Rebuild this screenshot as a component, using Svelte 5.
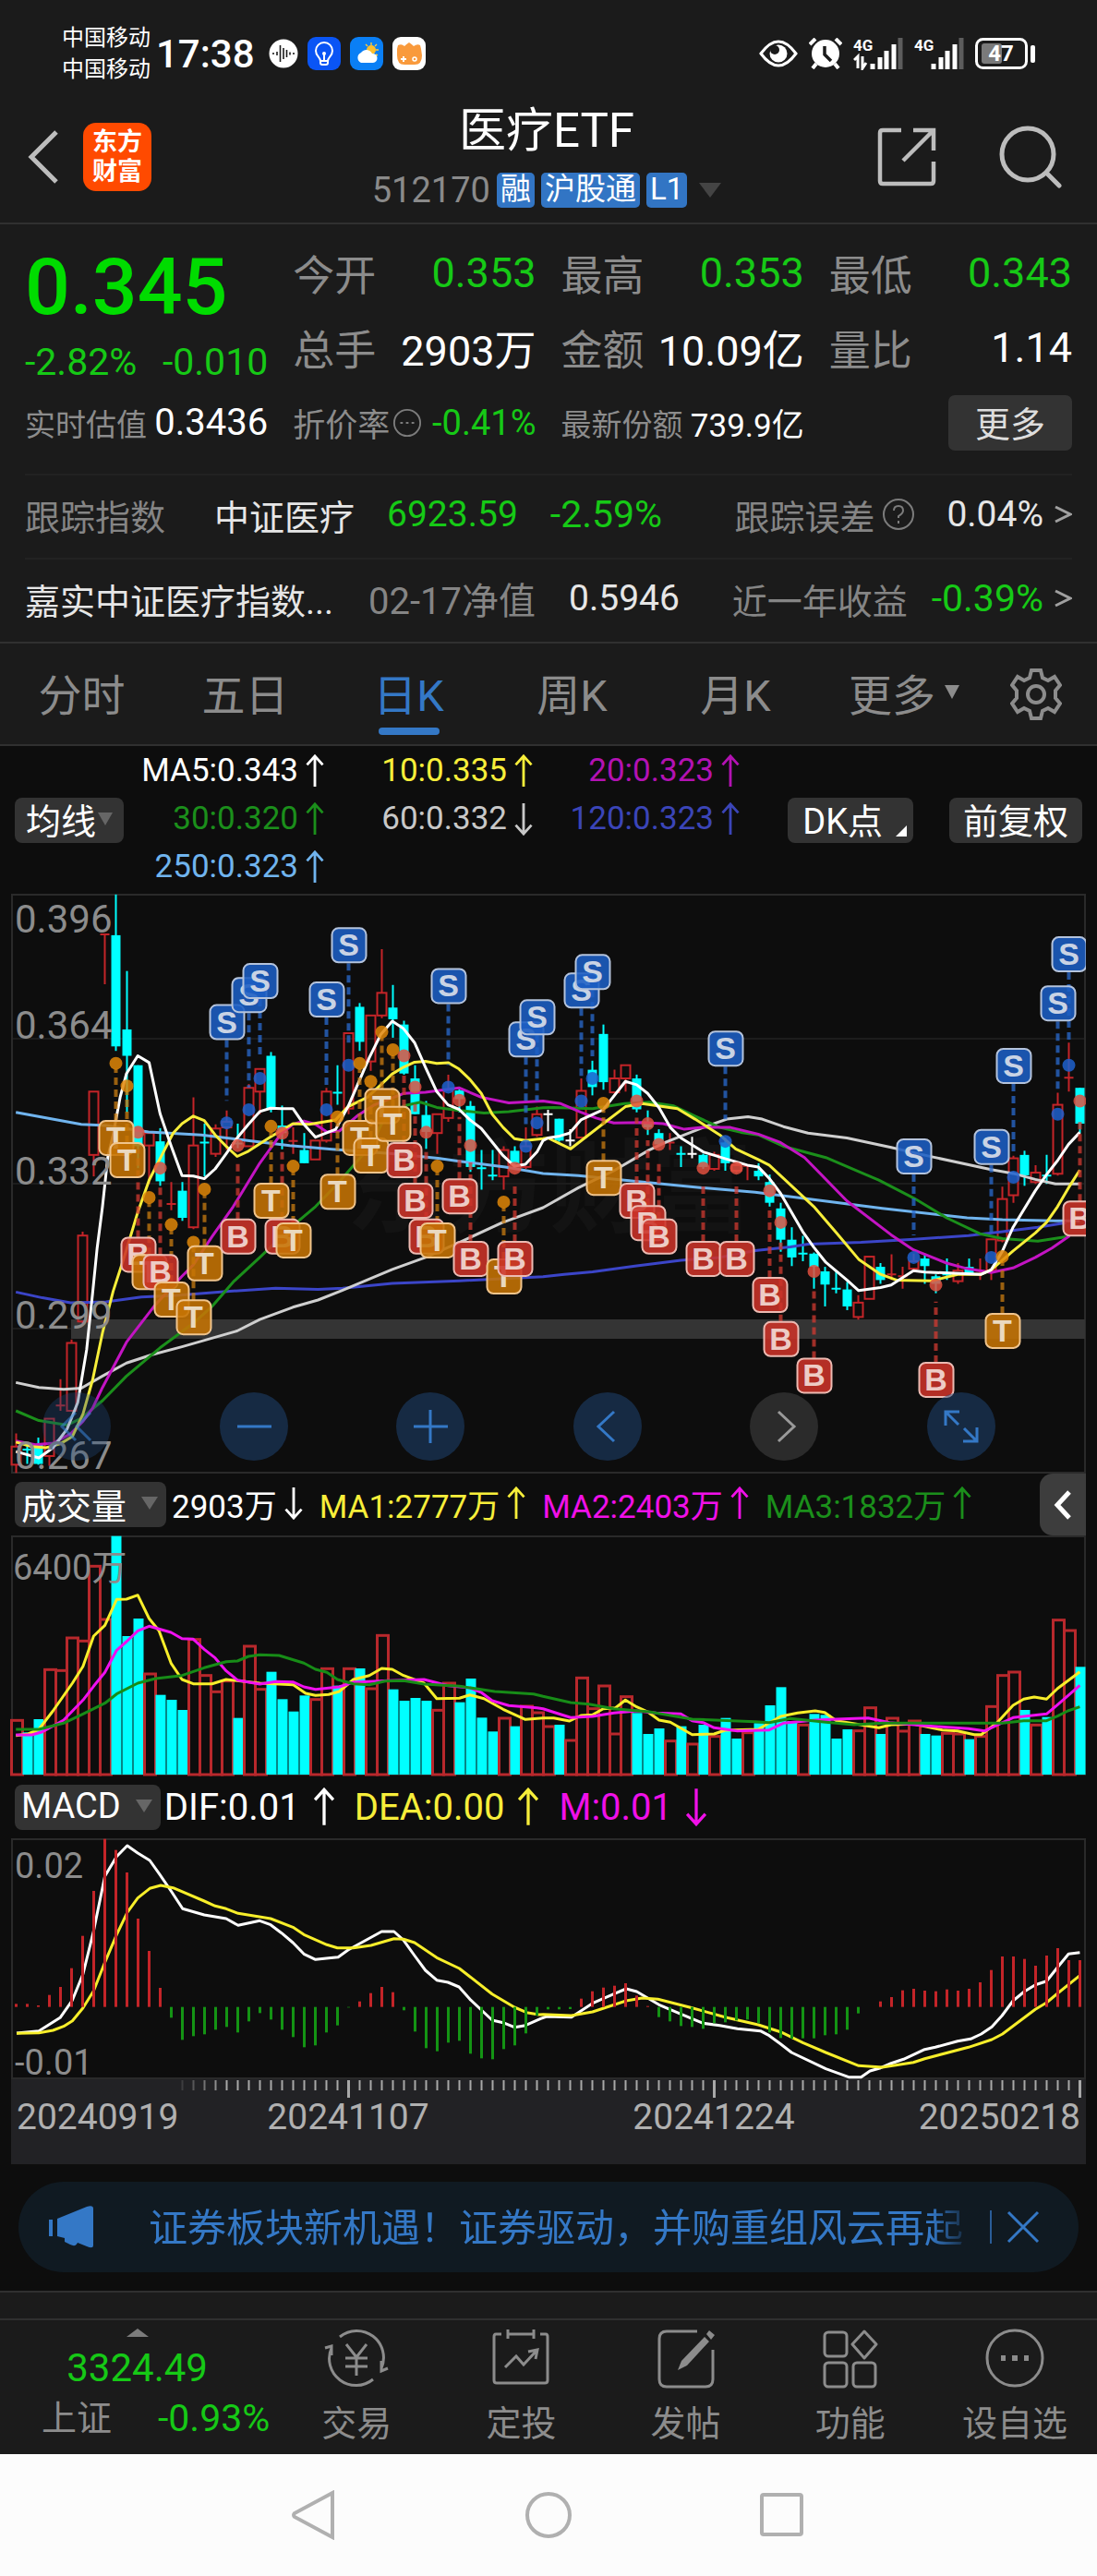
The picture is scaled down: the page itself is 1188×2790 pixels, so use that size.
<script>
  const STEP = 12;
  const cx = (i) => 5.5 + STEP * i;
  const sx = (v) => v / 2.6133 - 12;
  const sy = (v) => (v - 20) / 2.45;
  const vy = (v) => (v - 220) / 3;
  const my = (v) => (v - 214) / 3;

  const line = (text, fy, dx = 0) =>
    text
      .trim()
      .split(/\s+/)
      .map((p) => {
        const [x, y] = p.split(',').map(Number);
        return `${sx(x + dx).toFixed(1)},${fy(y).toFixed(1)}`;
      })
      .join(' ');
  // Each series is kept as two halves; the second half starts at HALF.
  const HALF = 1537;
  const series = (color, a, b, fy) => ({ color, pts: line(a, fy) + ' ' + line(b, fy, HALF) });

  // kind, high, body top, body bottom, low
  const candles = `r1452,1487,1535,1557 c1483,1495,1500,1533 c1463,1480,1533,1535 r1413,1413,1512,1538 r1308,1378,1380,1392 r1203,1212,1392,1392
  r917,927,1155,1160 r545,545,713,770 r128,128,130,260 c22,130,425,437 c225,380,450,600 c475,475,690,748 r655,655,688,790 c642,677,783,795
  r785,843,850,860 c785,808,880,888 r560,688,905,910 c630,680,685,770 r632,643,710,718 r595,625,640,700 c630,683,690,695 r525,535,690,690
  r485,485,545,605 c440,450,590,600 c582,635,655,698 r640,676,682,710 c655,700,735,735 r675,675,725,725 r535,545,675,680 c475,548,552,580
  r390,390,590,605 c310,320,413,437 r343,343,465,490 r167,283,343,350 c262,322,353,402 c357,367,497,500 c475,510,605,605 c570,607,652,697
  r603,605,655,710 r500,540,615,625 c535,542,565,600 c570,583,745,758 c700,748,752,805 c700,768,772,780 r690,700,770,805 c690,702,735,750
  r640,690,745,750 r585,605,660,665 w593,605,607,650 c617,617,675,678 w645,675,680,690 r510,543,667,667 c463,487,533,555 c367,392,520,540
  r487,510,547,550 r475,475,510,545 c500,510,592,600 c595,625,640,660 c645,655,685,690 r655,680,685,700 c690,710,714,745 w665,710,712,722
  c710,713,745,750 r705,713,750,755 c668,680,735,755 r735,740,755,760 r740,742,745,780 c735,755,770,780 c765,785,840,850 c840,855,938,970
  c905,938,985,1008 c928,975,982,995 c972,975,1010,1068 c1010,1022,1057,1115 c1022,1068,1072,1080 c1050,1070,1115,1125 r1085,1105,1143,1150
  r983,983,1095,1095 c1000,1010,1045,1055 r977,1030,1034,1045 r1010,1035,1040,1068 r975,995,1015,1018 c975,988,1008,1055 c1030,1035,1055,1080
  c988,1030,1034,1045 r1000,1020,1048,1055 c988,1010,1028,1030 r988,1020,1025,1045 r937,937,1020,1045 r797,830,940,945 r715,722,820,840
  c702,713,767,795 r740,760,785,790 c713,768,772,790 r548,580,763,768 r415,508,512,545 c535,535,630,655`
    .trim()
    .split(/\s+/)
    .map((s, i) => {
      const [hi, top, bot, lo] = s.slice(1).split(',').map((n) => sy(+n));
      return { kind: s[0], x: cx(i), hi, top, bot, lo };
    });

  const averages = [
    series('#70b4ee', '45,600 230,632 300,635 420,652 570,660 700,675 820,688 940,698 1110,710 1240,722 1300,730 1430,745', '0,762 100,768 250,782 450,800 600,812 750,830 960,855 1200,880 1300,885 1450,888 1519,888', sy),
    series('#3b45c8', '45,1077 120,1092 200,1105 300,1103 400,1090 500,1086 650,1075 780,1067 900,1070 970,1067 1110,1054 1300,1047', '0,1036 60,1030 140,1023 260,1008 390,993 500,985 600,967 700,957 750,950 900,945 1050,937 1204,927 1300,917 1400,905 1480,893', sy),
    series('#cfcfcf', '45,1317 110,1330 180,1335 230,1332 290,1300 358,1265 430,1243 515,1222 671,1180 735,1150 829,1117 900,1098 970,1072 1110,1017 1204,985 1300,945 1420,893', '0,853 100,800 200,755 300,700 350,678 453,640 520,618 580,612 620,618 680,638 750,655 860,668 985,693 1040,705 1100,718 1268,752 1330,762 1393,778 1450,790 1519,790', sy),
    series('#1b8f1b', '45,1392 110,1418 190,1430 230,1412 290,1365 358,1300 453,1225 547,1160 600,1115 660,1050 735,985 830,900 893,850 955,790 1020,720 1050,690 1080,630 1142,583 1190,573 1236,587 1300,595 1370,602 1440,598', '0,588 30,587 140,590 230,577 300,573 370,583 430,610 500,640 560,653 609,660 680,690 800,720 950,780 1050,828 1142,880 1236,922 1300,935 1400,942 1480,930', sy),
    series('#c314c3', '45,1472 100,1482 150,1478 200,1453 235,1420 262,1385 290,1330 358,1210 440,1110 515,1035 547,1005 600,930 660,850 735,735 797,655 829,632 860,623 893,632 925,652 960,650 1010,610 1060,580 1142,550 1204,547 1299,535 1362,560 1440,575', '0,570 50,577 107,600 150,615 200,628 280,627 340,630 400,645 450,640 530,640 609,658 672,680 740,720 860,835 985,925 1048,965 1142,1000 1200,1015 1268,1025 1330,1013 1393,985 1440,960 1490,928', sy),
    series('#f7ee3a', '45,1475 90,1487 130,1490 170,1480 205,1460 235,1400 262,1310 290,1185 320,1075 353,980 390,865 422,780 453,723 490,655 515,630 547,610 578,622 609,660 640,690 671,717 703,703 766,665 829,630 875,632 950,620 985,585 1040,560 1078,527 1110,498 1142,480 1173,467 1204,465 1236,470 1268,468 1299,485 1330,513 1362,550 1393,605 1424,640 1456,670 1487,675', '0,670 14,668 47,683 78,697 170,630 233,585 280,577 380,590 430,618 500,660 545,697 609,725 640,740 703,795 766,850 830,920 893,990 955,1030 1000,1045 1100,1047 1173,1030 1240,1030 1268,1018 1330,968 1393,920 1425,892 1456,850 1487,800 1519,753', sy),
    series('#ffffff', '45,1500 110,1517 150,1490 190,1440 220,1370 245,1230 262,1080 275,960 290,850 305,720 320,660 340,560 358,497 390,450 422,468 453,603 484,688 515,768 547,769 578,776 609,750 640,710 671,668 703,632 735,598 766,589 797,590 829,590 860,632 893,666 950,645 985,585 1045,455 1078,393 1110,358 1142,378 1173,415 1204,480 1236,545 1268,580 1299,592 1330,620 1362,643 1424,715 1456,743 1487,738 1520,705', '0,675 14,668 47,663 75,655 107,620 170,593 233,518 265,527 296,550 328,588 360,640 390,668 453,705 515,723 578,740 609,745 640,775 672,815 735,917 766,958 800,998 860,1045 893,1073 955,1065 985,1058 1048,1020 1080,1024 1240,1030 1268,1018 1299,970 1330,905 1393,808 1425,765 1456,728 1487,685 1519,653', sy)
  ];

  // type, index, badge centre, dot centre
  const signals = `T9,669,470 T10,728,530 B11,979,653 T12,1025,826 B13,1025,748 T14,1098,898 T16,1145,945 T17,1002,804 S19,362,628 B20,931,688 S21,290,593 S22,253,510
  T23,836,637 B24,931,655 T25,941,743 S28,302,593 T29,812,612 S30,158,475 T31,669,470 T33,585,387 T32,716,518 T34,632,434 B35,728,450 B36,836,533 B37,931,653
  T38,941,743 S39,266,533 B40,824,568 B41,990,688 T44,1037,838 B45,990,748 S46,408,690 S47,349,628 S51,278,570 S52,229,510 T53,775,576 B56,836,570 B57,895,630
  B58,931,685 B62,990,748 S64,432,677 B65,990,748 B68,1086,808 B69,1203,892 B72,1300,1022 S81,718,985 B83,1311,1058 S88,693,985 T89,1181,983 S90,478,772
  S94,312,605 S95,182,475 B96,883,570`
    .trim()
    .split(/\s+/)
    .map((s) => {
      const t = s[0];
      const [i, b, d] = s.slice(1).split(',').map(Number);
      const gap = t === 'S' ? -24 : t === 'B' ? 18 : 6;
      return { t, x: cx(i), by: sy(b), dy: sy(d), from: sy(b) + (t === 'S' ? 19 : -19), to: sy(d) + gap };
    });

  const volumes = `r818 c860 c817 r653 r656 r550 r560 r317 r490 c222 c547 c490 r667 c738 c754 c787 r555 r672 r725 r690 c813 r577 r717 c663 c752 c792 c740 r750 r650 c708
  r650 c652 r715 r542 c720 c757 c748 c757 r785 r697 c762 c685 c812 c857 r811 c840 r772 r793 r838 c835 r883 r680 r780 r706 r862 r741 c797 c865 c847 r885 c840 r895 c835
  r870 c813 c880 r858 c830 c772 c713 c823 r833 c800 c803 c880 c850 r852 r777 c865 r811 r853 r820 c865 c870 r860 r862 c882 r870 r773 r672 r661 c787 r833 c810 r492 r526 c647`
    .trim()
    .split(/\s+/)
    .map((s, i) => ({ up: s[0] === 'r', x: cx(i), y: vy(+s.slice(1)) }));

  const volumeLines = [
    series('#f7ee2a', '45,870 80,865 110,850 150,790 205,700 235,645 265,547 297,512 330,428 358,427 390,414 422,490 450,530 484,635 515,688 547,702 600,702 640,688 735,700 830,705 865,733 893,740 930,737 960,727 1000,688 1045,675 1080,652 1110,655 1142,675 1200,700 1236,750 1300,749 1330,738 1370,750 1424,785 1487,818', '0,813 30,813 75,823 107,805 140,803 170,783 205,780 233,755 265,777 296,793 328,820 360,827 422,867 484,865 515,853 609,850 672,808 720,797 770,790 797,795 830,822 950,845 985,835 1050,833 1130,852 1173,855 1220,867 1240,867 1285,828 1330,772 1360,752 1390,745 1425,752 1456,717 1519,663', vy),
    series('#f010f0', '45,868 90,868 120,858 180,820 235,755 265,710 297,665 330,593 358,565 390,530 422,515 484,535 515,555 547,557 578,590 609,618 640,660 672,690 735,703 780,695 829,696 860,712 893,720 960,712 1000,697 1100,692 1200,688 1268,708 1330,715 1362,730 1393,757 1440,773 1520,780', '0,783 78,812 140,808 200,797 265,790 320,797 390,800 422,822 453,828 484,845 550,855 640,852 680,830 770,820 830,817 920,813 980,828 1080,838 1204,848 1250,855 1330,812 1425,800 1456,770 1519,707', vy),
    series('#178c17', '45,850 110,850 180,830 235,800 297,765 330,735 390,700 440,685 515,675 578,650 640,630 672,628 703,613 735,608 790,610 860,635 893,655 925,665 955,688 1000,702 1045,705 1090,693 1142,692 1200,703 1300,710 1400,727 1510,735', '0,743 78,763 130,768 200,783 300,793 422,817 600,825 640,828 700,815 800,827 880,835 960,830 1300,830 1360,822 1425,822 1456,807 1485,790 1519,777', vy)
  ];

  const ZERO = my(762);
  const macd = `752 752 757 723 697 636 531 385 216 252 325 475 580 700 797 869 857 851 836 827 845 809 782 803 836 860 893 887 845 822 764 744 717 697 714 773 842 896 906 878 872
  914 929 932 899 887 848 790 770 770 769 735 711 699 693 685 725 759 795 809 824 827 833 815 812 806 803 815 845 863 865 864 864 854 851 836 783 762 744 730 708 703 709 711
  705 709 703 682 642 598 598 606 628 595 571 610 610`
    .trim()
    .split(/\s+/)
    .slice(0, 97)
    .map((s, i) => ({ x: cx(i), y: my(+s) }));

  const macdLines = [
    series('#ffffff', '47,847 110,840 170,797 205,740 235,655 265,515 297,337 330,273 360,238 390,262 424,286 453,333 484,385 517,443 578,463 640,475 674,497 735,482 766,495 797,522 829,553 860,590 893,608 930,603 957,600 985,577 1080,517 1115,517 1142,545 1173,595 1204,643 1236,675 1268,682 1299,697 1330,737 1393,805 1424,813 1456,828 1487,822 1530,800', '10,793 80,795 107,775 140,750 200,720 235,703 265,712 296,733 328,755 390,785 453,815 500,822 550,833 615,840 640,855 672,882 703,910 800,963 865,990 900,990 925,970 955,960 985,945 1020,932 1048,917 1080,900 1110,893 1173,873 1210,866 1240,850 1270,827 1299,790 1330,742 1362,712 1393,690 1425,678 1456,633 1487,590 1519,585', my),
    series('#f7ee2a', '47,848 110,846 150,838 180,825 205,807 235,765 265,710 297,617 330,527 360,455 390,408 424,377 455,367 490,375 578,418 609,434 640,443 674,458 766,475 829,503 860,527 925,560 955,570 1000,570 1050,562 1115,540 1142,542 1173,553 1236,602 1300,637 1393,720 1456,763 1490,780 1525,787', '0,786 80,790 140,778 235,742 280,733 325,737 422,765 515,795 609,820 672,843 735,878 800,910 893,953 960,958 1048,942 1080,930 1204,893 1270,868 1300,850 1393,770 1425,748 1456,718 1519,660', my)
  ];

  const ticks = Array.from({ length: 82 }, (_, k) => k + 15).map((i) => ({
    x: cx(i),
    h: i % 33 === 30 ? 19 : 11,
    w: i % 33 === 30 ? 3 : 2,
    o: Math.min(1, (i - 14) / 5)
  }));

  const priceLabels = [['0.396', 42], ['0.364', 157], ['0.332', 315], ['0.299', 471], ['0.267', 623]];

  const legend = [
    ['MA5:0.343', 'up', 'white'], ['10:0.335', 'up', 'yellow'], ['20:0.323', 'up', 'purple'],
    ['30:0.320', 'up', 'green'], ['60:0.332', 'down', 'silver'], ['120:0.323', 'up', 'blue'],
    ['250:0.323', 'up', 'sky']
  ];
  const volumeLegend = [['2903万', 'down', 'white'], ['MA1:2777万', 'up', 'yellow'], ['MA2:2403万', 'up', 'pink'], ['MA3:1832万', 'up', 'green']];
  const macdLegend = [['DIF:0.01', 'up', 'white'], ['DEA:0.00', 'up', 'yellow'], ['M:0.01', 'down', 'pink']];

  const chartTools = [
    ['后退到最早', 'M36 22 L21 37 L36 52 M52 22 L37 37 L52 52', 'dim'],
    ['缩小', 'M19 37 H56', ''],
    ['放大', 'M19 37 H56 M37 19 V55', ''],
    ['向左', 'M44 21 L27 37 L44 53', ''],
    ['向右', 'M31 21 L48 37 L31 53', 'off'],
    ['全屏', 'M20 36 V21 H35 M20 21 L34 35 M54 38 V53 H39 M54 53 L40 39', '']
  ];

  const tabs = ['分时', '五日', '日K', '周K', '月K'];
  let active = $state('日K');
</script>

{#snippet arrow(dir)}
  <svg class="arrow" viewBox="0 0 20 38" aria-hidden="true">
    <path d={dir === 'up' ? 'M10 37 V2 M1 12 L10 2 L19 12' : 'M10 1 V36 M1 26 L10 36 L19 26'} />
  </svg>
{/snippet}

<div class="page">
  <div class="status">
    <div class="carriers"><span>中国移动</span><span>中国移动</span></div>
    <span class="clock">17:38</span>
    <div class="apps">
      <svg viewBox="0 0 32 32" width="32" height="32"><circle cx="16" cy="16" r="15.500" fill="#fff" /><path d="M5 15v2M9 14v4M12.500 7v18M16 10v12M19.500 12v8M23 14.500v3M27 15v2" stroke="#1c1c1c" stroke-width="1.600" fill="none" /></svg>
      <svg viewBox="0 0 36 36" width="36" height="36"><rect width="36" height="36" rx="9" fill="#0a55f5" /><path d="M14 26 C14 22 9 21 9 15 A9 9 0 0 1 27 15 C27 21 22 22 22 26 V28 Q22 30 20 30 H16 Q14 30 14 28 Z M14 26 H22 M18 25 V19" stroke="#fff" stroke-width="2" fill="none" /><circle cx="18" cy="18" r="2" fill="#fff" /></svg>
      <svg viewBox="0 0 36 36" width="36" height="36"><rect width="36" height="36" rx="9" fill="#0a7ff5" /><path d="M23 6v3M17 8l2 2M29 8l-2 2M31 14h-3M30 20l-2-1" stroke="#ffc93c" stroke-width="1.400" /><circle cx="23" cy="14" r="5" fill="#ffc02e" /><path d="M12 28 a6 6 0 0 1 0-11 a7 7 0 0 1 12 1 a5 5 0 0 1 1 10 Z" fill="#fff" /></svg>
      <svg viewBox="0 0 36 36" width="36" height="36"><rect width="36" height="36" rx="9" fill="#fff" /><path d="M5 13 L6 9 Q10 7 13 10 Q15 8 18 6 Q21 8 23 10 Q27 7 30 9 L31 13 L32 20 Q32 30 24 30 H13 Q5 30 5 20 Z" fill="#f99a3c" /><path d="M9 24h6M12 21v6" stroke="#fff" stroke-width="2" /><circle cx="24" cy="24" r="2" fill="none" stroke="#fff" stroke-width="1.500" /></svg>
    </div>
    <div class="radio">
      <svg viewBox="0 0 42 30" width="42" height="30"><path d="M2 15 Q21 -11 40 15 Q21 41 2 15 Z" fill="none" stroke="#fff" stroke-width="3" /><circle cx="21" cy="15" r="9.500" fill="#fff" /><circle cx="17" cy="11" r="5" fill="#1b1b1b" /></svg>
      <svg viewBox="0 0 36 34" width="36" height="34"><circle cx="18" cy="17" r="15" fill="#fff" /><path d="M1 7 L7 1 M35 7 L29 1 M4 33 L8 28 M32 33 L28 28" stroke="#fff" stroke-width="4" /><path d="M17 9 V18 L24 25" stroke="#1b1b1b" stroke-width="3.500" fill="none" /></svg>
      <svg viewBox="0 0 54 36" width="54" height="36"><text x="0" y="15" font-size="17" font-weight="700" fill="#fff">4G</text><path d="M1 25 L5 21 V34 M10 21 V34 L14 28" stroke="#fff" stroke-width="3" fill="none" /><path d="M21 29v6M29 22v13M36 15v20M44 8v27" stroke="#fff" stroke-width="5" /><path d="M51 1v34" stroke="#5c5c5c" stroke-width="5" /></svg>
      <svg viewBox="0 0 54 36" width="54" height="36"><text x="0" y="15" font-size="17" font-weight="700" fill="#fff">4G</text><path d="M21 29v6M29 22v13M36 15v20M44 8v27" stroke="#fff" stroke-width="5" /><path d="M51 1v34" stroke="#5c5c5c" stroke-width="5" /></svg>
      <svg viewBox="0 0 66 36" width="66" height="36"><rect x="1.500" y="2.500" width="54" height="31" rx="7" fill="none" stroke="#fff" stroke-width="3" /><rect x="7" y="7" width="22" height="22" rx="3" fill="#7a7a7a" /><rect x="60" y="9" width="5" height="19" rx="2" fill="#fff" /><text x="28" y="26" font-size="24" font-weight="700" fill="#fff" text-anchor="middle">47</text></svg>
    </div>
  </div>

  <header>
    <div class="side">
      <button class="plain" aria-label="返回"><svg viewBox="0 0 34 60" width="34" height="60"><path d="M31 3 L4 30 L31 57" stroke="#bdbdbd" stroke-width="5" fill="none" /></svg></button>
      <a class="logo" href="#home"><span>东方</span><span>财富</span></a>
    </div>
    <div class="title">
      <h1>医疗ETF</h1>
      <div class="code"><span>512170</span><b>融</b><b>沪股通</b><b>L1</b><i></i></div>
    </div>
    <div class="side end">
      <button class="plain" aria-label="分享"><svg viewBox="0 0 64 64" width="64" height="64"><path d="M26 3 H6 Q3 3 3 6 V58 Q3 61 6 61 H58 Q61 61 61 58 V37 M39 3 H61 V25 M60 4 L28 36" stroke="#bdbdbd" stroke-width="4.500" fill="none" /></svg></button>
      <button class="plain" aria-label="搜索"><svg viewBox="0 0 68 68" width="68" height="68"><circle cx="31" cy="31" r="28" fill="none" stroke="#bdbdbd" stroke-width="5" /><path d="M52 52 L65 65" stroke="#bdbdbd" stroke-width="5" stroke-linecap="round" /></svg></button>
    </div>
  </header>

  <section class="quote">
    <div class="lead">
      <strong>0.345</strong>
      <div class="change"><span>-2.82%</span><span>-0.010</span></div>
    </div>
    <div class="cell"><span>今开</span><em class="g">0.353</em></div>
    <div class="cell"><span>最高</span><em class="g">0.353</em></div>
    <div class="cell"><span>最低</span><em class="g">0.343</em></div>
    <div class="cell"><span>总手</span><em>2903万</em></div>
    <div class="cell"><span>金额</span><em>10.09亿</em></div>
    <div class="cell"><span>量比</span><em>1.14</em></div>
    <div class="cell small"><span>实时估值</span><em class="wide">0.3436</em></div>
    <div class="cell small"><span class="tip">折价率<svg viewBox="0 0 34 34" width="32" height="32"><circle cx="17" cy="17" r="15" /><path d="M9 17h3M15.500 17h3M22 17h3" /></svg></span><em class="g">-0.41%</em></div>
    <div class="cell small"><span>最新份额</span><em>739.9亿</em></div>
    <div class="cell right"><button class="more">更多</button></div>
  </section>

  <a class="row" href="#index">
    <span class="muted">跟踪指数</span><span class="name">中证医疗</span><span class="g num">6923.59</span><span class="g pct">-2.59%</span>
    <span class="muted tip push">跟踪误差<svg viewBox="0 0 36 36" width="36" height="36"><circle cx="18" cy="18" r="16" /><path d="M13 14 Q13 9 18 9 Q23 9 23 14 Q23 17 18 20 V22 M18 25v3" /></svg></span>
    <span class="last num">0.04%</span><svg class="chev" viewBox="0 0 20 20"><path d="M2 2 L18 10 L2 18" /></svg>
  </a>
  <a class="row fund" href="#fund">
    <span>嘉实中证医疗指数...</span><span class="muted nav">02-17净值</span><span class="val num">0.5946</span>
    <span class="muted push">近一年收益</span>
    <span class="g pct last">-0.39%</span><svg class="chev" viewBox="0 0 20 20"><path d="M2 2 L18 10 L2 18" /></svg>
  </a>

  <nav class="tabs">
    {#each tabs as tab}
      <button class:on={tab === active} onclick={() => (active = tab)}><span>{tab}</span></button>
    {/each}
    <button class="drop"><span>更多</span><i></i></button>
    <button class="gear" aria-label="设置"><svg viewBox="0 0 56 56" width="56" height="56"><path d="M23 2 H33 L35 10 L41 13 L48 9 L54 18 L49 24 V32 L54 38 L48 47 L41 43 L35 46 L33 54 H23 L21 46 L15 43 L8 47 L2 38 L7 32 V24 L2 18 L8 9 L15 13 L21 10 Z" /><circle cx="28" cy="28" r="9" /></svg></button>
  </nav>

  <main>
    <div class="averages">
      <button class="chip ma">均线<i></i></button>
      <div class="legend">
        {#each legend as [text, dir, tone]}
          <span class="tag {tone}">{text}{@render arrow(dir)}</span>
        {/each}
      </div>
      <button class="chip dk">DK点<u></u></button>
      <button class="chip adj">前复权</button>
    </div>

    <div class="plot">
      <svg viewBox="0 0 1164 628" role="img" aria-label="日K线图">
        <clipPath id="inside"><rect width="1164" height="628" /></clipPath>
        <text class="mark" x="583" y="358">东方财富</text>
        <path class="grid" d="M0 157H1164M0 314H1164M0 471H1164" />
        <rect class="frame" x="1" y="1" width="1162" height="626" />
        <rect x="65" y="461" width="1098" height="21" fill="#343434" />
        {#each candles as c}
          {#if c.bot - c.top < 3}
            <path class="k {c.kind}" d="M{c.x} {c.hi}V{c.lo}M{c.x - 5} {c.top}h10" />
          {:else if c.kind === 'r'}
            <path class="k r" d="M{c.x} {c.hi}V{c.top}M{c.x} {c.bot}V{c.lo}" />
            <rect class="k r" x={c.x - 5} y={c.top} width="10" height={c.bot - c.top} />
          {:else}
            <path class="k c" d="M{c.x} {c.hi}V{c.lo}" />
            <rect x={c.x - 5} y={c.top} width="10" height={c.bot - c.top} fill="#00ffff" />
          {/if}
        {/each}
        {#each averages as a}<polyline points={a.pts} stroke={a.color} />{/each}
        <g clip-path="url(#inside)">
          {#each signals as s}
            <g class="sig {s.t}">
              <path d="M{s.x} {s.from}V{s.to}" />
              <circle cx={s.x} cy={s.dy} r="7" />
            </g>
          {/each}
          {#each signals as s}
            <g class="sig {s.t}">
              <rect x={s.x - 18} y={s.by - 19} width="37" height="37" rx="7" />
              <text x={s.x} y={s.by + 11}>{s.t}</text>
            </g>
          {/each}
        </g>
        {#each priceLabels as [t, y]}<text class="axis" x="4" {y}>{t}</text>{/each}
      </svg>
      <div class="tools">
        {#each chartTools as [name, d, tone]}
          <button class={tone} aria-label={name}><svg viewBox="0 0 74 74"><path {d} /></svg></button>
        {/each}
      </div>
    </div>

    <div class="bar">
      <button class="chip vol">成交量<i></i></button>
      {#each volumeLegend as [text, dir, tone]}
        <span class="tag {tone}">{text}{@render arrow(dir)}</span>
      {/each}
      <button class="fold" aria-label="展开"><svg viewBox="0 0 20 34" width="20" height="34"><path d="M17 3 L4 17 L17 31" /></svg></button>
    </div>
    <div class="plot">
      <svg viewBox="0 0 1164 260" role="img" aria-label="成交量">
        <rect class="frame" x="1" y="1" width="1162" height="258" />
        {#each volumes as v}
          {#if v.up}
            <rect class="vr" x={v.x - 5} y={v.y + 1} width="12" height={258 - v.y} />
          {:else}
            <rect x={v.x - 5} y={v.y} width="11" height={259 - v.y} fill="#00ffff" />
          {/if}
        {/each}
        {#each volumeLines as a}<polyline points={a.pts} stroke={a.color} />{/each}
        <text class="axis vl" x="2" y="48">6400万</text>
      </svg>
    </div>

    <div class="bar macd">
      <button class="chip">MACD<i></i></button>
      {#each macdLegend as [text, dir, tone]}
        <span class="tag {tone}">{text}{@render arrow(dir)}</span>
      {/each}
    </div>
    <div class="plot">
      <svg viewBox="0 0 1164 261" role="img" aria-label="MACD">
        <rect class="frame" x="1" y="1" width="1162" height="259" />
        {#each macdLines as a}<polyline points={a.pts} stroke={a.color} />{/each}
        {#each macd as m}
          <path d="M{m.x} {ZERO}V{m.y}" stroke={m.y < ZERO ? '#c42428' : '#149414'} stroke-width="3" />
        {/each}
        <text class="axis ml" x="4" y="43">0.02</text>
        <text class="axis ml" x="4" y="256">-0.01</text>
      </svg>
      <svg class="dates" viewBox="0 0 1164 92" role="img" aria-label="日期">
        {#each ticks as t}<path d="M{t.x} 1v{t.h}" stroke="#a8a8a8" stroke-width={t.w} opacity={t.o} />{/each}
        <text x="6" y="54">20240919</text>
        <text x="365" y="54" text-anchor="middle">20241107</text>
        <text x="761" y="54" text-anchor="middle">20241224</text>
        <text x="1158" y="54" text-anchor="end">20250218</text>
      </svg>
    </div>

    <div class="notice">
      <svg viewBox="0 0 50 48" width="50" height="48"><path d="M10 15 L42 2 Q49 0 49 4 V44 Q49 48 42 45 L32 41 Q30 46 24 43 L18 40 V36 L10 34 Z M1 16 H5 V34 H1 Z" fill="#3478c6" /></svg>
      <a href="#news">证券板块新机遇！证券驱动，并购重组风云再起</a>
      <button class="plain" aria-label="关闭"><svg viewBox="0 0 36 36" width="36" height="36"><path d="M2 2 L34 34 M34 2 L2 34" stroke="#3478c6" stroke-width="3" /></svg></button>
    </div>
  </main>

  <div class="strip"></div>
  <footer>
    <a class="market" href="#market"><i></i><b>3324.49</b><div><span>上证</span><em>-0.93%</em></div></a>
    <button><svg viewBox="0 0 70 70"><path d="M17 12 A29 29 0 0 1 62 46 M53 58 A29 29 0 0 1 8 24 M1 24 L8 22 V32 M69 46 L62 49 V38 M24 20 L35 34 L46 20 M35 34 V54 M23 35 H47 M23 44 H47" /></svg>交易</button>
    <button><svg viewBox="0 0 70 70"><path d="M14 9 H8 Q6 9 6 12 V59 Q6 62 9 62 H61 Q64 62 64 59 V12 Q64 9 62 9 H56 M21 9 H49 M21 4 V14 M49 4 V14 M18 45 L30 33 L38 42 L52 27 M43 28 L53 26 L51 36" /></svg>定投</button>
    <button><svg viewBox="0 0 70 70"><path d="M47 6 H14 Q6 6 6 14 V58 Q6 66 14 66 H56 Q64 66 64 58 V26" /><path class="pen" d="M26 48 L30 38 L55 12 L60 17 L36 43 Z M57 9 L60 5 L66 10 L62 15 Z" /></svg>发帖</button>
    <button><svg viewBox="0 0 70 70"><rect x="7" y="7" width="24" height="26" rx="4" /><rect x="7" y="40" width="24" height="26" rx="4" /><rect x="38" y="40" width="24" height="26" rx="4" /><path d="M50 6 L63 20 L50 35 L37 20 Z" stroke-linejoin="round" /></svg>功能</button>
    <button><svg viewBox="0 0 70 70"><circle cx="35" cy="35" r="30" /><path d="M20 35h5M32 35h6M45 35h5" stroke-width="6" /></svg>设自选</button>
  </footer>
  <div class="system">
    <button class="plain" aria-label="后退"><svg viewBox="0 0 54 54" width="54" height="54"><path d="M46 3 V51 L5 29 Q3 27 5 25 Z" /></svg></button>
    <button class="plain" aria-label="主页"><svg viewBox="0 0 54 54" width="54" height="54"><circle cx="27" cy="27" r="23" /></svg></button>
    <button class="plain" aria-label="最近"><svg viewBox="0 0 54 54" width="54" height="54"><rect x="5" y="5" width="43" height="43" rx="2" /></svg></button>
  </div>
</div>

<style>
  :global(body) { margin: 0; background: #1b1b1b; }
  .page { font-family: Roboto, 'Noto Sans CJK SC', sans-serif; color: #e6e6e6; background: #1b1b1b; overflow: hidden; }
  .page * { box-sizing: border-box; }
  svg { display: block; flex: none; }
  button { font: inherit; color: inherit; border: 0; padding: 0; background: none; display: flex; align-items: center; justify-content: center; }
  a { color: inherit; text-decoration: none; }
  em, i { font-style: normal; }

  .status { display: flex; align-items: center; height: 98px; padding: 18px 66px 0 67px; color: #fff; }
  .carriers { display: flex; flex-direction: column; font-size: 24px; line-height: 34px; }
  .clock { font-size: 42px; font-weight: 500; margin-left: 6px; }
  .apps { display: flex; align-items: center; gap: 10px; margin-left: 15px; }
  .radio { display: flex; align-items: center; gap: 12px; margin-left: auto; }

  header { display: grid; grid-template-columns: 1fr auto 1fr; align-items: center; height: 145px; padding: 0 38px 0 30px; border-bottom: 2px solid #303030; }
  .side { display: flex; align-items: center; gap: 26px; }
  .end { justify-content: flex-end; gap: 68px; }
  .logo { display: flex; flex-direction: column; align-items: center; justify-content: center; width: 74px; height: 74px; border-radius: 14px; background: #ff4a00; color: #fff; font-weight: 700; font-size: 27px; line-height: 32px; }
  .title { display: flex; flex-direction: column; align-items: center; padding: 5px 0 0 4px; }
  h1 { margin: 0; font-weight: 400; font-size: 51px; line-height: 68px; color: #fff; }
  .code { display: flex; align-items: center; gap: 7px; height: 60px; font-size: 38px; color: #8a8a8a; }
  .code b { height: 38px; padding: 0 4px; border-radius: 5px; background: #3275c4; color: #fff; font-weight: 400; font-size: 33px; line-height: 36px; }
  .code i { margin-left: 6px; border: 12px solid transparent; border-top: 16px solid #444; border-bottom: 0; }

  .quote { display: grid; grid-template-columns: repeat(4, minmax(0, 1fr)); grid-auto-rows: 81px; column-gap: 27px; padding: 12px 27px 15px; }
  .lead { grid-row: span 2; display: flex; flex-direction: column; padding-top: 3px; color: #16c916; }
  .lead strong { font-weight: 500; font-size: 86px; line-height: 106px; color: #00dc00; }
  .change { display: flex; justify-content: space-between; font-size: 41px; line-height: 56px; }
  .cell { display: flex; align-items: center; justify-content: space-between; font-size: 45px; white-space: nowrap; }
  .cell span { color: #8c8c8c; }
  .cell em { color: #fff; }
  .cell.small { font-size: 33px; }
  .cell.small .tip { font-size: 35px; }
  .cell.small em { font-size: 35px; }
  .cell.small em.wide { font-size: 40px; }
  .cell.right { justify-content: flex-end; }
  .g, .cell .g { color: #16c916; }
  .cell.small em.g { font-size: 38px; }
  .tip { display: flex; align-items: center; }
  .tip svg { margin-left: 3px; fill: none; stroke: #7c7c7c; stroke-width: 2; }
  .more { width: 134px; height: 60px; padding-bottom: 3px; border-radius: 7px; background: #333; color: #ddd; font-size: 38px; }

  .row { display: flex; align-items: center; height: 91px; margin: 0 27px; padding-bottom: 5px; border-top: 2px solid #222; font-size: 38px; white-space: nowrap; }
  .muted { color: #858585; }
  .num { font-size: 39px; }
  .pct { font-size: 41px; }
  .name { margin-left: 53px; }
  .row .g { margin-left: 35px; }
  .row .push { margin-left: auto; }
  .row .tip svg { margin-left: 8px; }
  .row .last { margin-left: 34px; }
  .fund .last.g { margin-left: 26px; }
  .fund .nav { margin-left: 38px; font-size: 40px; }
  .fund .val { margin-left: 36px; }
  .chev { width: 20px; height: 20px; margin-left: 11px; fill: none; stroke: #a0a0a0; stroke-width: 3; }

  .tabs { display: grid; grid-template-columns: repeat(5, 177fr) 188fr 98fr; height: 113px; padding-right: 17px; border-top: 2px solid #303030; border-bottom: 2px solid #303030; font-size: 47px; color: #8c8c8c; }
  .tabs button { position: relative; padding-bottom: 5px; }
  .tabs .gear { padding-bottom: 0; }
  .tabs .on { color: #3478c6; }
  .tabs .on::after { content: ''; position: absolute; bottom: 10px; width: 66px; height: 8px; border-radius: 4px; background: #3478c6; }
  .tabs i { margin-left: 10px; border: 8px solid transparent; border-top: 15px solid #8c8c8c; border-bottom: 0; }
  .gear svg { fill: none; stroke: #8c8c8c; stroke-width: 4; }

  main { background: #0d0d0d; padding-bottom: 20px; }
  .averages { display: flex; align-items: center; height: 160px; padding: 0 16px; }
  .chip { flex: none; height: 49px; padding: 0 12px 3px; border-radius: 8px; background: #333; color: #fff; font-size: 38px; white-space: nowrap; }
  .chip i { margin-left: 22px; border: 9px solid transparent; border-top: 14px solid #666; border-bottom: 0; }
  .chip.ma i { margin-left: 2px; border-width: 14px 8px 0; }
  .chip.adj { padding: 0 15px 3px; }
  .chip.dk { margin: 0 39px 0 auto; padding: 0 7px 3px 16px; }
  .chip.dk u { align-self: flex-end; margin: 0 0 4px 14px; border-left: 12px solid transparent; border-bottom: 12px solid #fff; }
  .legend { display: grid; grid-template-columns: 217px 226px 224px; grid-auto-rows: 52px; justify-items: end; }
  .tag { display: flex; align-items: center; padding-bottom: 3px; font-size: 35px; white-space: nowrap; }
  .arrow { width: 20px; height: 36px; margin-left: 8px; fill: none; stroke: currentColor; stroke-width: 3; }
  .white { color: #fff; }
  .yellow { color: #f7ee3a; }
  .purple { color: #b312b3; }
  .green { color: #1b8f1b; }
  .silver { color: #c8c8c8; }
  .blue { color: #3b45b8; }
  .sky { color: #70b4ee; }
  .pink { color: #f010e8; }

  .plot { position: relative; margin: 0 12px; }
  .plot > svg { width: 100%; height: auto; overflow: visible; }
  .frame { fill: none; stroke: #2a2a2a; stroke-width: 2; }
  .grid { stroke: #1c1c1c; stroke-width: 2; }
  .mark { font-size: 110px; font-weight: 700; fill: #131313; text-anchor: middle; }
  polyline { fill: none; stroke-width: 3; stroke-linejoin: round; }
  .k { fill: none; stroke-width: 2; }
  .k.r { stroke: #c42428; }
  .k.c { stroke: #00ffff; }
  .k.w { stroke: #fff; }
  .vr { fill: none; stroke: #b8282c; stroke-width: 3; }
  .axis { font-size: 42px; fill: #8c8c8c; }
  .vl { font-size: 38px; }
  .ml { font-size: 38px; }
  .sig path { stroke-width: 4; stroke-dasharray: 8 5; fill: none; opacity: 0.75; }
  .sig rect { stroke-width: 2; fill-opacity: 0.88; }
  .sig circle { opacity: 0.85; }
  .sig text { font: 700 34px 'Liberation Sans', sans-serif; text-anchor: middle; }
  .S path { stroke: #2a6bd0; }
  .S circle { fill: #1f62cf; }
  .S rect { fill: #1d5fc4; stroke: #b4c3dc; }
  .S text { fill: #c9d3e4; }
  .T path { stroke: #c97c10; }
  .T circle { fill: #e08708; }
  .T rect { fill: #c67404; stroke: #f0c48c; }
  .T text { fill: #ead9c0; }
  .B path { stroke: #d03a30; }
  .B circle { fill: #e05040; }
  .B rect { fill: #cc3329; stroke: #ecbab2; }
  .B text { fill: #edccc6; }

  .tools { position: absolute; left: 34px; right: 98px; bottom: 14px; display: flex; justify-content: space-between; }
  .tools button { width: 74px; height: 74px; border-radius: 50%; background: rgba(32, 72, 122, 0.5); }
  .tools svg { width: 74px; height: 74px; fill: none; stroke: #3478c6; stroke-width: 3; }
  .tools .dim { opacity: 0.7; }
  .tools .off { background: #2b2b2b; }
  .tools .off svg { stroke: #9a9a9a; }

  .bar { display: flex; align-items: center; gap: 18px; height: 67px; padding: 0 12px 0 16px; }
  .bar .chip { margin-right: -12px; padding: 0 9px 3px 7px; }
  .bar .chip i { margin-left: 16px; }
  .macd { height: 68px; gap: 22px; }
  .macd .tag { padding-bottom: 0; font-size: 40px; }
  .macd .chip { margin-right: -18px; }
  .macd .arrow { width: 22px; height: 42px; margin-left: 15px; }
  .fold { align-self: stretch; width: 50px; margin-left: auto; border-radius: 14px 0 0 14px; background: #3d3d3d; }
  .fold svg { fill: none; stroke: #fff; stroke-width: 5; }
  .plot > .dates { background: #222225; }
  .dates text { font-size: 39px; fill: #b0b0b0; }

  .notice { display: flex; align-items: center; height: 98px; margin: 19px 20px 0; padding: 0 42px 0 32px; border-radius: 49px; background: #101a22; color: #3478c6; font-size: 42px; }
  .notice a { flex: 1; margin-left: 59px; padding-bottom: 6px; white-space: nowrap; overflow: hidden; -webkit-mask-image: linear-gradient(90deg, #000 93%, transparent 98%); mask-image: linear-gradient(90deg, #000 93%, transparent 98%); }
  .notice button { height: 36px; padding-left: 16px; border-left: 2px solid #2a5d98; }

  .strip { height: 30px; border-top: 2px solid #303030; }
  footer { display: grid; grid-template-columns: 297fr repeat(5, 178fr); height: 147px; border-top: 2px solid #303030; font-size: 38px; color: #8c8c8c; }
  footer > button { flex-direction: column; justify-content: flex-start; padding-top: 6px; line-height: 72px; }
  footer svg { width: 70px; height: 70px; fill: none; stroke: #8c8c8c; stroke-width: 3; }
  footer .pen { fill: #8c8c8c; stroke: none; }
  .market { display: flex; flex-direction: column; align-items: center; color: #16c916; padding-top: 9px; }
  .market i { border: 12px solid transparent; border-top: 0; border-bottom: 9px solid #7c7c7c; }
  .market b { font-weight: 400; font-size: 42px; line-height: 68px; }
  .market div { display: flex; align-items: center; gap: 50px; padding-left: 40px; line-height: 40px; }
  .market span { color: #8c8c8c; }
  .market em { font-size: 41px; }
  .system { display: flex; justify-content: center; align-items: center; gap: 199px; height: 132px; background: #fcfcfc; }
  .system svg { fill: none; stroke: #b0b0b0; stroke-width: 4; }
</style>
